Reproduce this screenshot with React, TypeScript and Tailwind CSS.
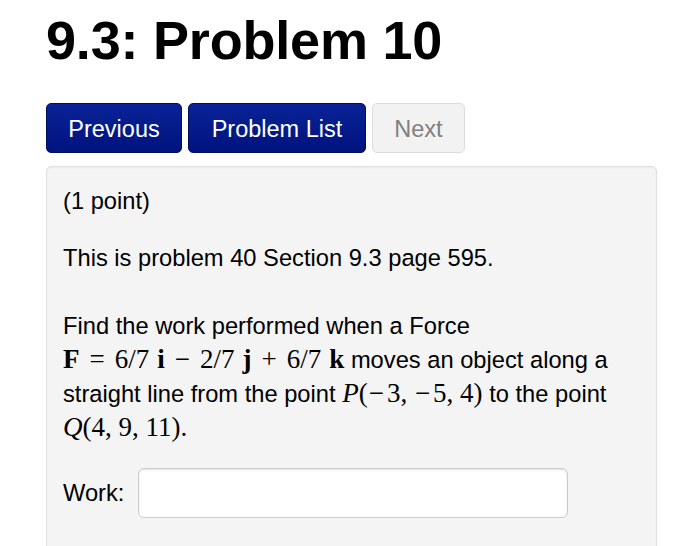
import React from "react";

const M = ({ children }: { children: React.ReactNode }) => (
  <span className="font-['Liberation_Serif',serif] text-[27px] leading-none">{children}</span>
);

const Op = ({ children }: { children: React.ReactNode }) => (
  <span className="mx-[10px]">{children}</span>
);

const Minus = () => <span className="pl-[1px] pr-[3px]">−</span>;

export default function App() {
  return (
    <div className="h-[546px] overflow-hidden bg-white font-['Liberation_Sans',Arial,sans-serif] text-black pl-[46px] pr-[43px] pt-[12px]">
      <h1 className="text-[54px] font-bold leading-[56px] tracking-[-0.2px]">9.3: Problem 10</h1>
      <div className="flex gap-[6px] mt-[35px]">
        <button className="h-[50px] w-[136px] pt-[3px] rounded-[5px] border border-[#001060] bg-gradient-to-b from-[#0a2296] to-[#00137e] text-white text-[23.5px]">Previous</button>
        <button className="h-[50px] w-[178px] pt-[3px] rounded-[5px] border border-[#001060] bg-gradient-to-b from-[#0a2296] to-[#00137e] text-white text-[23.5px]">Problem List</button>
        <button className="h-[50px] w-[93px] pt-[3px] rounded-[5px] border border-[#dcdcdc] bg-[#f2f2f2] text-[#808080] text-[23.5px]">Next</button>
      </div>
      <div className="mt-[13px] rounded-[5px] border border-[#e0e0e0] bg-[#f4f4f4] shadow-[inset_0_1px_2px_rgba(0,0,0,0.04)] pl-[16px] pr-[8px] pt-[19px] pb-[40px] text-[23.7px] leading-[30px]">
        <p>(1 point)</p>
        <p className="mt-[27px]">This is problem 40 Section 9.3 page 595.</p>
        <p className="mt-[36px] leading-[34px] whitespace-nowrap">
          Find the work performed when a Force
          <br />
          <M>
            <b>F</b>
            <Op>=</Op>6/7<span className="ml-[8px]" />
            <b>i</b>
            <Op>−</Op>2/7<span className="ml-[8px]" />
            <b>j</b>
            <Op>+</Op>6/7<span className="ml-[8px]" />
            <b>k</b>
          </M>{" "}
          moves an object along a
          <br />
          straight line from the point{" "}
          <M>
            <i>P</i>(<Minus />3, <Minus />5, 4)
          </M>{" "}
          to the point
          <br />
          <M>
            <i>Q</i>(4, 9, 11).
          </M>
        </p>
        <div className="mt-[23px] flex items-center gap-[14px]">
          <span>Work:</span>
          <input
            type="text"
            className="h-[50px] w-[430px] rounded-[6px] border border-[#cccccc] bg-white shadow-[inset_0_1px_2px_rgba(0,0,0,0.12)] outline-none"
          />
        </div>
      </div>
    </div>
  );
}
